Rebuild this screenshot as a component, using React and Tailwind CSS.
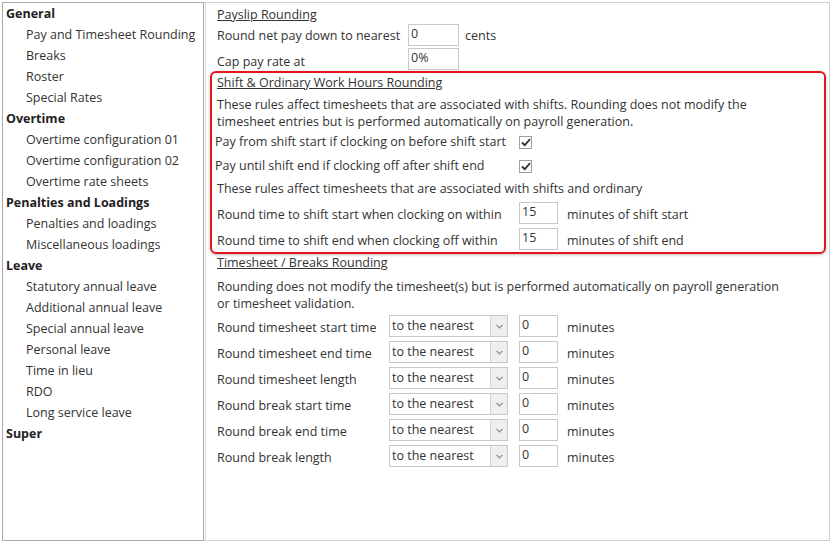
const nav = [
  { title: 'General', items: ['Pay and Timesheet Rounding', 'Breaks', 'Roster', 'Special Rates'] },
  { title: 'Overtime', items: ['Overtime configuration 01', 'Overtime configuration 02', 'Overtime rate sheets'] },
  { title: 'Penalties and Loadings', items: ['Penalties and loadings', 'Miscellaneous loadings'] },
  {
    title: 'Leave',
    items: ['Statutory annual leave', 'Additional annual leave', 'Special annual leave', 'Personal leave', 'Time in lieu', 'RDO', 'Long service leave'],
  },
  { title: 'Super', items: [] },
]

const roundingRows = [
  'Round timesheet start time',
  'Round timesheet end time',
  'Round timesheet length',
  'Round break start time',
  'Round break end time',
  'Round break length',
]

function TextBox({ value, className = '' }) {
  return (
    <div className={`h-[22px] border border-[#c8c8c8] bg-white px-[2px] leading-[18px] ${className}`}>{value}</div>
  )
}

function Check() {
  return (
    <div className="flex h-[13px] w-[13px] items-center justify-center border border-[#a0a0a0] bg-white">
      <svg width="10" height="9" viewBox="0 0 10 9">
        <path d="M1 4.5 L3.8 7.2 L9 1.2" fill="none" stroke="#333" strokeWidth="1.8" />
      </svg>
    </div>
  )
}

function RoundSelect() {
  return (
    <div className="flex h-[22px] w-[119px] border border-[#c8c8c8] bg-white">
      <div className="flex-1 px-[2px] leading-[19px]">to the nearest</div>
      <div className="flex w-[17px] items-center justify-center border-l border-[#d4d4d4] bg-[#efefef]">
        <svg width="7" height="5" viewBox="0 0 7 5">
          <path d="M0.5 0.8 L3.5 3.8 L6.5 0.8" fill="none" stroke="#888" strokeWidth="1.2" />
        </svg>
      </div>
    </div>
  )
}

export default function App() {
  return (
    <div
      className="flex h-[543px] w-[831px] bg-white pl-[2px] pt-[2px] pb-[2px] pr-[1px] text-[12.5px] text-[#333]"
      style={{ fontFamily: '"Open Sans", Arial, sans-serif' }}
    >
      <div className="w-[202px] border border-[#a9a9a9]">
        {nav.map(group => (
          <div key={group.title}>
            <div className="h-[21px] pl-[3px] font-bold leading-[21px] text-[#222]">{group.title}</div>
            {group.items.map(item => (
              <div key={item} className="h-[21px] pl-[23px] leading-[21px]">{item}</div>
            ))}
          </div>
        ))}
      </div>

      <div className="flex-1 border border-l-0 border-[#d0d0d0]">
        <div className="ml-[1px] h-full border-l border-[#d8d8d8] pl-[11px] pt-[2px]">
          {/* payslip */}
          <div className="h-[18px] leading-[20px] underline">Payslip Rounding</div>
          <div className="flex h-[24px] items-center">
            <span className="w-[191px] pt-[3px]">Round net pay down to nearest</span>
            <TextBox value="0" className="w-[51px]" />
            <span className="ml-[6px] pt-[3px]">cents</span>
          </div>
          <div className="flex h-[24px] items-center">
            <span className="w-[191px] pt-[7px]">Cap pay rate at</span>
            <TextBox value="0%" className="w-[51px]" />
          </div>

          {/* shift & ordinary */}
          <div className="-ml-[7px] mr-[3px] h-[183px] rounded-[6px] border-2 border-[#e8141c] pl-[5px] pr-2 shadow-[0_1px_3px_rgba(0,0,0,0.25)]">
            <div className="h-[19px] leading-[20px] underline">Shift &amp; Ordinary Work Hours Rounding</div>
            <p className="mt-[4px] w-[560px] leading-[17px]">
              These rules affect timesheets that are associated with shifts. Rounding does not modify the timesheet entries but is performed automatically on payroll generation.
            </p>
            <div className="-ml-[2px] flex h-[24px] items-center">
              <span className="w-[304px]">Pay from shift start if clocking on before shift start</span>
              <Check />
            </div>
            <div className="-ml-[2px] flex h-[24px] items-center">
              <span className="w-[304px]">Pay until shift end if clocking off after shift end</span>
              <Check />
            </div>
            <div className="h-[22px] leading-[22px]">These rules affect timesheets that are associated with shifts and ordinary</div>
            <div className="flex h-[26px] items-center">
              <span className="w-[302px] pt-[4px]">Round time to shift start when clocking on within</span>
              <TextBox value="15" className="w-[39px]" />
              <span className="ml-[9px] pt-[4px]">minutes of shift start</span>
            </div>
            <div className="flex h-[26px] items-center">
              <span className="w-[302px] pt-[4px]">Round time to shift end when clocking off within</span>
              <TextBox value="15" className="w-[39px]" />
              <span className="ml-[9px] pt-[4px]">minutes of shift end</span>
            </div>
          </div>

          {/* timesheet / breaks */}
          <div className="h-[17px] leading-[18px] underline">Timesheet / Breaks Rounding</div>
          <p className="mt-[7px] w-[568px] leading-[17px]">
            Rounding does not modify the timesheet(s) but is performed automatically on payroll generation or timesheet validation.
          </p>
          <div className="mt-[1px]">
            {roundingRows.map(label => (
              <div key={label} className="flex h-[26px] items-center">
                <span className="w-[172px] pt-[4px]">{label}</span>
                <RoundSelect />
                <TextBox value="0" className="ml-[11px] w-[39px]" />
                <span className="ml-[9px] pt-[4px]">minutes</span>
              </div>
            ))}
          </div>
        </div>
      </div>
    </div>
  )
}
